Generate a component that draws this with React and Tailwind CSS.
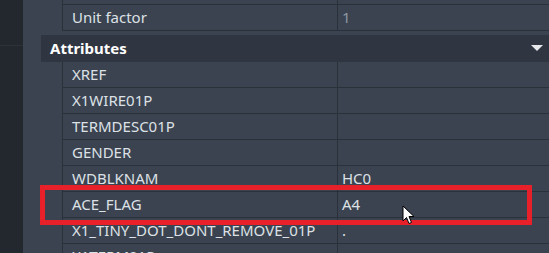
import React from 'react';

const rows = [
  { name: 'XREF', value: '' },
  { name: 'X1WIRE01P', value: '' },
  { name: 'TERMDESC01P', value: '' },
  { name: 'GENDER', value: '' },
  { name: 'WDBLKNAM', value: 'HC0' },
  { name: 'ACE_FLAG', value: 'A4' },
  { name: 'X1_TINY_DOT_DONT_REMOVE_01P', value: '.' },
  { name: 'X1TERM01P', value: '' },
];

const Row = ({ name, value, dim, h = 'h-[26px]' }) => (
  <div className={`flex shrink-0 ${h} ml-[39px] border-b border-[#2b313a]`}>
    <div className="w-[275px] shrink-0 border-l border-[#2b313a] pl-[9px] flex items-center overflow-hidden whitespace-nowrap text-[#dde1e6]">
      {name}
    </div>
    <div className={`flex-1 border-l border-[#2b313a] pl-[4px] flex items-center ${dim ? 'text-[#8d96a3]' : 'text-[#dde1e6]'}`}>
      {value}
    </div>
  </div>
);

const App = () => {
  return (
    <div
      className="relative w-[549px] h-[253px] overflow-hidden flex bg-[#3b4350] text-[15px]"
      style={{ fontFamily: '"Noto Sans", "Open Sans", sans-serif' }}
    >
      <div className="w-[23px] shrink-0 bg-[#23272e] flex flex-col">
        <div className="h-[45px] shrink-0" />
        <div className="h-px shrink-0 bg-[#2d323a]" />
      </div>

      <div className="flex-1 flex flex-col">
        <Row name="" value="" h="h-[5px]" />
        <Row name="Unit factor" value="1" dim />
        <div className="h-[4px] shrink-0" />
        <div className="ml-[18px] h-[27px] shrink-0 bg-[#2f3541] flex items-center justify-between pl-[9px] pr-[6px]">
          <span className="font-bold text-white">Attributes</span>
          <svg width="12" height="7" viewBox="0 0 12 7">
            <path d="M0 0 H12 L6 6 Z" fill="#e6e8eb" />
          </svg>
        </div>
        {rows.map((r) => (
          <Row key={r.name} name={r.name} value={r.value} />
        ))}
      </div>

      <div className="absolute left-[40px] top-[185px] w-[492px] h-[40px] border-[5px] border-[#e8202a]" />

      <svg className="absolute left-[402px] top-[205px]" width="14" height="20" viewBox="0 0 14 20">
        <path d="M1 1 L1 16 L4.5 12.5 L7 18.5 L9.5 17.5 L7 11.5 L12 11.5 Z" fill="#fff" stroke="#000" strokeWidth="1" />
      </svg>
    </div>
  );
};

export default App;
